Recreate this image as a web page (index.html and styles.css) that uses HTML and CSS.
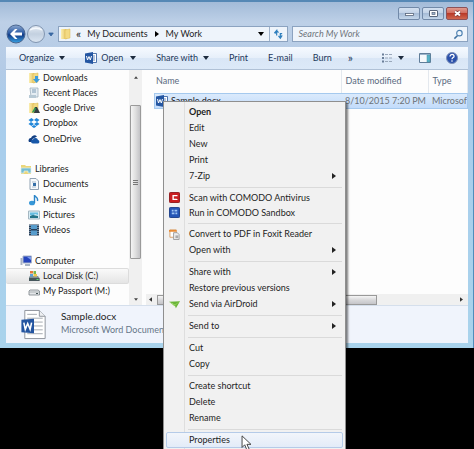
FILE: index.html
```html
<!DOCTYPE html>
<html lang="en">
<head>
<meta charset="utf-8">
<title>My Work</title>
<link rel="stylesheet" href="styles.css">
</head>
<body>
<svg class="defs" aria-hidden="true">
  <defs>
    <linearGradient id="navBlue" x2="0" y2="1"><stop offset="0" stop-color="#8da9d0"/><stop offset=".45" stop-color="#2c5ba4"/><stop offset=".55" stop-color="#123b86"/><stop offset="1" stop-color="#39a5e6"/></linearGradient>
    <linearGradient id="navGray" x2="0" y2="1"><stop offset="0" stop-color="#e6edf5"/><stop offset=".5" stop-color="#c3d0e0"/><stop offset="1" stop-color="#dbe6f2"/></linearGradient>
    <linearGradient id="gold" x2="1" y2="0"><stop offset="0" stop-color="#fbeeb0"/><stop offset="1" stop-color="#e2bd55"/></linearGradient>
    <symbol id="folder" viewBox="0 0 12 12"><path d="M1 1h5l1 1v9H1z" fill="url(#gold)"/><path d="M5 2l5-1v9l-5 1z" fill="#f3da83" stroke="#d9b650" stroke-width=".5"/></symbol>
    <symbol id="word" viewBox="0 0 12 12"><path d="M6 1.500h5.500v9H6z" fill="#fff" stroke="#2b579a" stroke-width=".8"/><path d="M8 4h2M8 6h2M8 8h2" stroke="#2b579a" stroke-width=".7"/><path d="M0 1.500L8 0v12L0 10.500z" fill="#2456a2"/><path d="M1.500 4l1 4L4 4.500 5.300 8l1.200-4" fill="none" stroke="#fff"/></symbol>
  </defs>
</svg>
<main class="window">
  <header class="titlebar">
    <button class="cap" aria-label="Minimize"><svg viewBox="0 0 20 11"><rect x="6.500" y="5.500" width="8" height="2" fill="#fff" stroke="#59677c" stroke-width=".8"/></svg></button>
    <button class="cap" aria-label="Maximize"><svg viewBox="0 0 20 11"><rect x="6.500" y="2.500" width="8" height="6" rx=".5" fill="#fff" stroke="#59677c"/><rect x="9" y="4.500" width="3" height="2" fill="#9fb5cf" stroke="#59677c" stroke-width=".7"/></svg></button>
    <button class="cap close" aria-label="Close"><svg viewBox="0 0 20 11"><path d="M8 3.500l5 4M13 3.500l-5 4" stroke="#6b2b2b" stroke-width="3"/><path d="M8 3.500l5 4M13 3.500l-5 4" stroke="#fff" stroke-width="2"/></svg></button>
  </header>
  <nav class="address-row">
    <button class="nav" aria-label="Back"><svg viewBox="0 0 20 20"><circle cx="10" cy="10" r="9" fill="url(#navBlue)" stroke="#49658f"/><path d="M4 10l5-5h2.500L8.500 8.500H16v3H8.500l3 3.500H9z" fill="#fff"/></svg></button>
    <button class="nav" aria-label="Forward"><svg viewBox="0 0 20 20"><circle cx="10" cy="10" r="8.500" fill="url(#navGray)" stroke="#8195b0"/><path d="M4 6a8 5 0 0 1 12 0" stroke="#f5f9fd" stroke-width="1.500" fill="none"/></svg></button>
    <button class="recent" aria-label="Recent pages"><svg viewBox="0 0 8 6"><path d="M1 1h6L4 5z" fill="#3c6ea9" stroke="#325f99"/></svg></button>
    <div class="address">
      <svg class="ico"><use href="#folder"/></svg>
      <span class="chev">«</span><a href="#">My Documents</a>
      <svg class="crumb" viewBox="0 0 4 6"><path d="M0 0l4 3-4 3z"/></svg><a href="#">My Work</a>
      <svg class="down end" viewBox="0 0 6 4"><path d="M0 0h6L3 4z"/></svg>
      <button class="refresh" aria-label="Refresh"><svg viewBox="0 0 12 12"><path d="M2 5l2-3v3.500M1.500 4.500L4 1.500l2 2.500M4 2v5M10 7l-2 3-2-2.500M8 10V5h2" fill="none" stroke="#2f7fbd" stroke-width="1.300"/></svg></button>
    </div>
    <label class="search"><input type="text" placeholder="Search My Work" aria-label="Search My Work"><svg viewBox="0 0 12 12"><circle cx="7" cy="4.500" r="3" fill="#eef6fd" stroke="#4b7fb0" stroke-width="1.200"/><path d="M5 7L1.500 10.500" stroke="#3c6f9f" stroke-width="1.600"/></svg></label>
  </nav>
  <div class="toolbar">
    <button>Organize <svg class="down" viewBox="0 0 6 4"><path d="M0 0h6L3 4z"/></svg></button>
    <button class="open"><svg class="ico"><use href="#word"/></svg>Open <svg class="down" viewBox="0 0 6 4"><path d="M0 0h6L3 4z"/></svg></button>
    <button>Share with <svg class="down" viewBox="0 0 6 4"><path d="M0 0h6L3 4z"/></svg></button>
    <button>Print</button>
    <button>E-mail</button>
    <button>Burn</button>
    <button class="more">»</button>
    <div class="tools">
      <button aria-label="Change view"><svg class="ico" viewBox="0 0 12 12"><path d="M1 2.500h2M1 6h2M1 9.500h2" stroke="#6b7f99" stroke-width="2"/><path d="M4 2.500h3M8 2.500h3M4 6h3M8 6h3M4 9.500h3M8 9.500h3" stroke="#9aa8ba"/></svg><svg class="down" viewBox="0 0 6 4"><path d="M0 0h6L3 4z"/></svg></button>
      <button aria-label="Preview pane"><svg class="ico" viewBox="0 0 12 12"><path d="M.5 1.500h11v9H.5z" fill="#f5f9fc" stroke="#607d99"/><path d="M1 2.500h10" stroke="#9db4ca"/><path d="M8 3h3v7H8z" fill="#57b2c8" stroke="#4990a6" stroke-width=".5"/></svg></button>
      <button aria-label="Help"><svg class="ico" viewBox="0 0 12 12"><circle cx="6" cy="6" r="5.500" fill="#2a50ab" stroke="#7d90b8"/><path d="M4 4.500c0-3 4.500-2.500 4 0-.3 1-2 1.300-2 2.700" fill="none" stroke="#fff" stroke-width="1.300"/><circle cx="6" cy="9" r=".8" fill="#fff"/></svg></button>
    </div>
  </div>
  <div class="content">
    <aside class="side">
      <ul class="tree">
        <li><svg class="ico"><use href="#folder"/></svg>Downloads<svg class="over" viewBox="0 0 12 12"><path d="M7 4h3v3h2l-3.500 4L5 7h2z" fill="#3c9bdc"/></svg></li>
        <li><svg class="ico" viewBox="0 0 12 12"><path d="M2 1h8v9H3z" fill="#e5edf3" stroke="#9fb0bd" stroke-width=".8"/><path d="M4 3h4M4 5h4" stroke="#7e9bb4"/><path d="M1 8h7v3H1z" fill="#b7c9d5"/></svg>Recent Places</li>
        <li><svg class="ico"><use href="#folder"/></svg>Google Drive<svg class="over" viewBox="0 0 12 12"><path d="M7 5h2l3 6H6z" fill="#333d42"/><path d="M7 5l-3 5 1 1 3-4z" fill="#2f9c52"/></svg></li>
        <li><svg class="ico" viewBox="0 0 12 12"><path d="M3.500 1L6 3 3 5 .5 3zM8.500 1L6 3l3 2 2.500-2zM3 5l3 2-2.500 2L.5 7zM9 5L6 7l2.500 2 3-2zM3.500 9.500L6 8l2.500 1.500L6 11z" fill="#2087d9"/></svg>Dropbox</li>
        <li><svg class="ico" viewBox="0 0 12 12"><path d="M1 9a2.500 2.500 0 0 1 2-4 3.500 3.500 0 0 1 6-1.500L4.500 6 3.500 9z" fill="#123f83"/><path d="M5 10.500a2 2 0 0 1 0-4 2.700 2.700 0 0 1 5 .5 1.800 1.800 0 0 1 0 3.500z" fill="#1757a8"/></svg>OneDrive</li>
        <li class="gap"></li>
        <li class="root"><svg class="ico" viewBox="0 0 12 12"><path d="M1 2h4l1 1h5v8H1z" fill="#ead67b"/><path d="M1 5h10v5H8V8H4v2H1z" fill="#75bdd3" stroke="#dff1ee" stroke-width=".7"/></svg>Libraries</li>
        <li><svg class="ico" viewBox="0 0 12 12"><path d="M2 .5h6l2.500 2.500v8.500H2z" fill="#f7fafc" stroke="#91a2b3"/><path d="M4 4h4M4 9h4" stroke="#a9bccd"/><path d="M5 5h3v3H5z" fill="#346fa8"/></svg>Documents</li>
        <li><svg class="ico" viewBox="0 0 12 12"><ellipse cx="4" cy="9" rx="3" ry="2.300" fill="#3697d7"/><path d="M6.500 9V1c0 2 4 2 3 6" fill="none" stroke="#2a85c9" stroke-width="1.400"/></svg>Music</li>
        <li><svg class="ico" viewBox="0 0 12 12"><path d="M.5 2h11v8H.5z" fill="#d8edf5" stroke="#a5b7c2"/><path d="M2 3.500h8V6L7 5 5 7 2 6z" fill="#68bde0"/><path d="M2 7l3-1 5 1v2H2z" fill="#247489"/></svg>Pictures</li>
        <li><svg class="ico" viewBox="0 0 12 12"><path d="M1 .5h10v11H1z" fill="#263f5b"/><path d="M3 1h6v4H3zM3 6.500h6V11H3z" fill="#579ccc"/><path d="M2 1v10M10 1v10" stroke="#cad7e0" stroke-dasharray="1 1"/></svg>Videos</li>
        <li class="gap"></li>
        <li class="root"><svg class="ico" viewBox="0 0 12 12"><path d="M.5 3h2v7h-2z" fill="#a8b3c4"/><path d="M3 1h8.500v7H3z" fill="#2544bd" stroke="#a7b3c9"/><path d="M7 2h4v3z" fill="#7c9cef"/><path d="M5 10h5" stroke="#8b9bb0" stroke-width="1.500"/></svg>Computer</li>
        <li class="selected"><svg class="ico" viewBox="0 0 12 12"><path d="M1 7l1-1h8l1.500 2v3H1z" fill="#819197"/><path d="M1 8h10.500v3H1z" fill="#46575c"/><path d="M2 1h3v2.500H2z" fill="#e57b3a"/><path d="M5.500 1H8v3H5.500z" fill="#79b94e"/><path d="M2 4h3v2.500H2z" fill="#59a2d8"/><path d="M5.500 4H9v2.500H5.500z" fill="#eec94d"/><path d="M8.500 9.500h2" stroke="#61df77"/></svg>Local Disk (C:)</li>
        <li><svg class="ico" viewBox="0 0 12 12"><path d="M1 6l1-1h8l1.500 1v4H1z" fill="#e4e7e9" stroke="#7a8286" stroke-width=".8"/><path d="M1 7h10" stroke="#aab0b3"/><path d="M8 8.500h2" stroke="#455" stroke-width="1.200"/></svg>My Passport (M:)</li>
      </ul>
      <div class="vscroll"><svg class="tip" viewBox="0 0 6 4"><path d="M0 4h6L3 0z"/></svg><div class="vthumb"><i></i><i></i><i></i></div><svg class="tip" viewBox="0 0 6 4"><path d="M0 0h6L3 4z"/></svg></div>
    </aside>
    <section class="files">
      <table>
        <thead><tr><th class="c-name">Name</th><th class="c-date">Date modified</th><th>Type</th></tr></thead>
        <tbody><tr><td><span class="file"><svg class="ico"><use href="#word"/></svg>Sample.docx</span></td><td>8/10/2015 7:20 PM</td><td>Microsof</td></tr></tbody>
      </table>
      <div class="hscroll"><svg class="side-tip" viewBox="0 0 4 6"><path d="M4 0v6L0 3z"/></svg><div class="hthumb"></div><svg class="side-tip" viewBox="0 0 4 6"><path d="M0 0l4 3-4 3z"/></svg></div>
    </section>
  </div>
  <footer class="details">
    <svg class="doc" viewBox="0 0 28 32"><path d="M4.500 1.500h15l6 6v23h-21z" fill="#fff" stroke="#8e949d"/><path d="M19.500 1.500v6h6" fill="#eef0f3" stroke="#8e949d"/><path d="M7 5.500h10M7 9.500h16M14 13.500h9M14 17.500h9M14 21.500h9M7 25.500h16" stroke="#a3a8b0"/><path d="M1 11l13-1v15L1 24z" fill="#2354a0"/><path d="M3.500 14l1.500 7 2.500-6 2.500 6 1.500-7" fill="none" stroke="#fff" stroke-width="1.600"/></svg>
    <div><div class="doc-name">Sample.docx</div><div class="doc-type">Microsoft Word Document</div></div>
  </footer>
</main>
<div class="menu" role="menu">
  <button role="menuitem" class="bold">Open</button>
  <button role="menuitem">Edit</button>
  <button role="menuitem">New</button>
  <button role="menuitem">Print</button>
  <button role="menuitem" class="sub">7-Zip</button>
  <hr>
  <button role="menuitem" class="compact"><svg class="mi" viewBox="0 0 12 12"><rect x=".5" y=".5" width="11" height="11" rx="1" fill="#c91d20" stroke="#8b1518"/><path d="M8.500 4.500V4h-4v4h4v-.5" fill="none" stroke="#fff" stroke-width="1.500"/></svg>Scan with COMODO Antivirus</button>
  <button role="menuitem" class="compact"><svg class="mi" viewBox="0 0 12 12"><rect x=".5" y=".5" width="11" height="11" rx="1" fill="#2455b6" stroke="#173b85"/><path d="M3 3h2v2H3zM6 3h3v2H6zM3 6h3v2H3zM7 6h2v2H7z" fill="#9fc5f4"/></svg>Run in COMODO Sandbox</button>
  <hr>
  <button role="menuitem"><svg class="mi" viewBox="0 0 12 12"><path d="M1 1h7v8H1z" fill="#fff" stroke="#d59b62"/><path d="M0 1h8v2H0z" fill="#e98b35"/><path d="M5 4h4l2 2v5.500H5z" fill="#eee" stroke="#999"/><path d="M7 7h3v3H7z" fill="#aaa"/></svg>Convert to PDF in Foxit Reader</button>
  <button role="menuitem" class="sub">Open with</button>
  <hr>
  <button role="menuitem" class="sub">Share with</button>
  <button role="menuitem">Restore previous versions</button>
  <button role="menuitem" class="sub"><svg class="mi" viewBox="0 0 12 12"><path d="M0 3l12-.5L7.500 10 6 6z" fill="#69b537"/><path d="M0 3l6 3 6-3.500L6 8z" fill="#8ccc54"/></svg>Send via AirDroid</button>
  <hr>
  <button role="menuitem" class="sub">Send to</button>
  <hr>
  <button role="menuitem">Cut</button>
  <button role="menuitem">Copy</button>
  <hr>
  <button role="menuitem">Create shortcut</button>
  <button role="menuitem">Delete</button>
  <button role="menuitem">Rename</button>
  <hr>
  <button role="menuitem" class="hover">Properties</button>
</div>
<svg class="cursor" viewBox="0 0 12 18"><path d="M1 1v13l3-3 2.500 6 2.500-1-2.500-5.500H11z" fill="#fff" stroke="#333"/></svg>
</body>
</html>
```
FILE: styles.css
```css
* { box-sizing: border-box; }
body {
  margin: 0;
  min-height: 100vh;
  overflow: hidden;
  position: relative;
  background: #000;
  color: #1e1e1e;
  font: 9px/12px Lato, "Open Sans", sans-serif;
}
button {
  font: inherit;
  color: inherit;
  background: none;
  border: 0;
  padding: 0;
  display: flex;
  align-items: center;
  white-space: nowrap;
}
a { color: inherit; text-decoration: none; }
svg { flex: none; display: block; }
.defs { position: absolute; width: 0; height: 0; }
.ico { width: 12px; height: 12px; }
.down { width: 6px; height: 4px; }

.window {
  border-top: 2px solid #5688b5;
  border-right: 1px solid #4f8dbb;
  padding: 0 5px 5px 6px;
  background: linear-gradient(#a3bbd8, #bdd0e7 20px, #b4cbe6 66px, #a9cdec 110px, #a9d3ec);
}
.titlebar {
  display: flex;
  justify-content: flex-end;
  gap: 2px;
  height: 22px;
  padding-top: 5px;
}
.cap {
  width: 22px;
  height: 13px;
  border: 1px solid #7189a8;
  border-radius: 2px;
  background: linear-gradient(#d3e0f0, #c0d1e6 50%, #a6bcd7 50%, #c3d6ea);
}
.cap svg { width: 20px; height: 11px; }
.close { border-color: #8c5258; background: linear-gradient(#e09a8e, #d0695a 50%, #b93a29 50%, #d0674e); }

.address-row { display: flex; align-items: center; height: 20px; }
.nav svg { width: 20px; height: 20px; }
.recent { padding: 0 4px 0 2px; }
.recent svg { width: 6px; height: 5px; }
.address, .search {
  display: flex;
  align-items: center;
  height: 16px;
  border: 1px solid #8ca3c0;
  background: #eef4fb;
}
.address { flex: 1; padding-left: 1px; }
.chev { margin: 0 6px 0 4px; font-size: 12px; line-height: 10px; }
.crumb { width: 4px; height: 6px; margin: 0 7px; }
.end { margin-left: auto; }
.refresh { height: 14px; margin-left: 5px; padding: 0 3px; border-left: 1px solid #9fb2ca; }
.refresh svg { width: 11px; height: 11px; }
.search { width: 38%; margin-left: 4px; padding: 0 3px 0 5px; }
.search input {
  flex: 1;
  min-width: 0;
  padding: 0;
  border: 0;
  outline: 0;
  background: none;
  font: inherit;
  font-style: italic;
}
.search input::placeholder { color: #6f757c; opacity: 1; }
.search svg { width: 11px; height: 11px; }

.toolbar {
  display: flex;
  align-items: center;
  gap: 20px;
  height: 23px;
  margin-top: 3px;
  padding: 0 10px 0 13px;
  background: linear-gradient(#f6faff, #e6effa 50%, #d9e6f6 50%, #dce9f8);
  border-bottom: 1px solid #b0c1d6;
  color: #1e395b;
}
.toolbar .down { margin-left: 5px; fill: #1d2b3e; }
.open .ico { margin-right: 4px; }
.toolbar .open .down { margin-left: 7px; }
.more { font-size: 12px; margin-left: -4px; }
.tools { display: flex; gap: 15px; margin-left: auto; }

.content { display: flex; height: 235px; background: #fdfdfd; }
.side { display: flex; width: 136px; }
.tree {
  flex: 1;
  display: grid;
  grid-template-rows: repeat(15, 1fr);
  margin: 0;
  padding: 0 0 6px;
  list-style: none;
}
.tree li { position: relative; display: flex; align-items: center; gap: 3px; padding-left: 22px; }
.tree .root { padding-left: 14px; }
.over { position: absolute; left: 22px; width: 12px; height: 12px; }
.selected { background: linear-gradient(#fafafa, #e5e5e5); border: 1px solid #dcdcdc; border-left: 0; border-radius: 2px; }
.vscroll {
  width: 13px;
  display: flex;
  flex-direction: column;
  align-items: center;
  padding: 6px 0 4px;
  background: #f0f0f0;
}
.tip { width: 4px; height: 3px; fill: #444; }
.vthumb {
  width: 11px;
  height: 154px;
  margin: 26px 0 auto;
  display: flex;
  flex-direction: column;
  align-items: center;
  justify-content: center;
  gap: 1px;
  border: 1px solid #9a9a9a;
  border-radius: 1px;
  background: linear-gradient(90deg, #f4f4f4, #dfdfdf 50%, #c3c3c6);
}
.vthumb i { width: 5px; height: 1px; background: #777; }

.files { flex: 1; min-width: 0; display: flex; flex-direction: column; padding-left: 4px; }
table { margin-left: 8px; table-layout: fixed; border-collapse: collapse; color: #6d7379; }
th { height: 23px; padding: 0 0 0 4px; text-align: left; font-weight: 400; color: #596a80; border-right: 1px solid #e3e8ee; border-bottom: 1px solid #e3e8ee; }
.c-name { width: 187px; padding-left: 2px; }
.c-date { width: 87px; }
td { height: 16px; padding: 0 0 0 4px; white-space: nowrap; }
tbody tr { background: linear-gradient(#dcebfc, #c1dbfb); outline: 1px solid #a5c9ee; outline-offset: -1px; }
td:first-child { padding-left: 2px; color: #1e1e1e; }
.file { display: flex; align-items: center; gap: 3px; }
.hscroll { display: flex; align-items: center; height: 11px; margin-top: auto; padding: 0 5px 0 3px; background: #f0f0f0; }
.side-tip { width: 3px; height: 5px; fill: #333; }
.hthumb { width: 220px; height: 10px; margin: 0 auto 0 5px; border: 1px solid #999; background: linear-gradient(#f5f5f5, #d8d8da 50%, #c5c5c9); }

.details { display: flex; gap: 13px; height: 38px; padding: 3px 0 0 14px; background: #f0f4fc; border-top: 1px solid #d5dfec; line-height: 14px; }
.doc { width: 28px; height: 31px; }
.doc-name { font-size: 10px; }
.doc-type { color: #667688; }

.menu {
  position: absolute;
  left: 163px;
  top: 101px;
  width: 183px;
  padding: 2px;
  border: 1px solid #8f8f8f;
  background: linear-gradient(90deg, #f1f1f1 20px, #dedede 20px, #dedede 21px, #f1f1f1 21px);
  box-shadow: 2px 2px 2px rgba(0, 0, 0, .5);
}
.menu button { position: relative; width: 100%; height: 16px; padding-left: 23px; border-radius: 2px; }
.menu .compact { height: 15px; }
.menu .bold { font-weight: 700; }
.menu hr { height: 1px; margin: 3px 1px 2px 22px; border: 0; background: #dadada; }
.menu .hover { background: linear-gradient(#f3f6fb, #e2ebf8); outline: 1px solid #b5cbe8; outline-offset: -1px; }
.mi { position: absolute; left: 3px; width: 11px; height: 11px; }
.sub::after {
  content: "";
  margin: 0 7px 0 auto;
  border: 3px solid transparent;
  border-left: 4px solid #222;
  border-right: 0;
}
.cursor { position: absolute; left: 241px; top: 435px; width: 11px; height: 16px; }
```
